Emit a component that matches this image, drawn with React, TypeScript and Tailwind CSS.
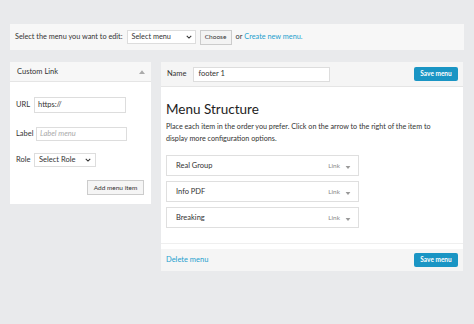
import React from 'react'

const font = { fontFamily: 'Lato, "Liberation Sans", sans-serif' }

function Caret({ className = '' }: { className?: string }) {
  return (
    <svg viewBox="0 0 8 5" className={className} width="6" height="4">
      <path d="M1 1l3 3 3-3" fill="none" stroke="#333" strokeWidth="1.4" />
    </svg>
  )
}

function MenuItem({ title }: { title: string }) {
  return (
    <div className="flex h-[21px] w-[193px] items-center border border-[#dfdfdf] bg-white pl-[9px] pr-[7px]">
      <span className="flex-1 text-[7.5px] text-[#333]">{title}</span>
      <span className="text-[6.5px] text-[#888]">Link</span>
      <svg viewBox="0 0 8 5" width="6" height="3" className="ml-[5px] mt-[4px]">
        <path d="M0 0h8L4 5z" fill="#999" />
      </svg>
    </div>
  )
}

export default function App() {
  return (
    <div className="h-[324px] w-[474px] overflow-hidden bg-[#e9eaec] px-[10px] pt-[24px]" style={font}>
      {/* menu picker */}
      <div className="flex h-[26px] items-center bg-[#f7f7f7] pl-[5px] text-[7.3px] text-[#333]">
        <span>Select the menu you want to edit:</span>
        <div className="ml-[4px] flex h-[14px] w-[69px] items-center justify-between border border-[#ddd] bg-white pl-[4px] pr-[3px]">
          <span>Select menu</span>
          <Caret />
        </div>
        <div className="ml-[4px] flex h-[15px] w-[32px] items-center justify-center border border-[#ccc] bg-[#f3f3f3] text-[6.5px]">
          Choose
        </div>
        <span className="ml-[4px]">or</span>
        <span className="ml-[2px] text-[#1e9fce]">Create new menu.</span>
      </div>

      <div className="mt-[12px] flex items-start gap-[10px]">
        {/* custom link */}
        <div className="w-[141px] bg-white">
          <div className="flex h-[20px] items-center justify-between border-b border-[#e5e5e5] bg-[#f7f7f7] pl-[7px] pr-[6px] text-[7.5px] text-[#333]">
            <span>Custom Link</span>
            <svg viewBox="0 0 8 5" width="6" height="4">
              <path d="M0 5h8L4 0z" fill="#aaa" />
            </svg>
          </div>
          <div className="flex flex-col px-[6px] pb-[9px] pt-[15px] text-[7.5px] text-[#333]">
            <div className="flex items-center">
              <span className="w-[18px]">URL</span>
              <div className="flex h-[16px] w-[92px] items-center border border-[#ddd] pl-[3px]">https://</div>
            </div>
            <div className="mt-[14px] flex items-center">
              <span className="w-[20px]">Label</span>
              <div className="flex h-[14px] w-[91px] items-center border border-[#ddd] pl-[3px] italic text-[#aaa]">
                Label menu
              </div>
            </div>
            <div className="mt-[12px] flex items-center">
              <span className="w-[18px]">Role</span>
              <div className="flex h-[14px] w-[62px] items-center justify-between border border-[#ddd] pl-[4px] pr-[4px]">
                <span>Select Role</span>
                <Caret />
              </div>
            </div>
            <div className="mt-[13px] flex justify-end pr-[1px]">
              <div className="flex h-[15px] w-[57px] items-center justify-center border border-[#ccc] bg-[#f5f5f5] text-[6.5px]">
                Add menu item
              </div>
            </div>
          </div>
        </div>

        {/* menu structure */}
        <div className="w-[302px] bg-white">
          <div className="flex h-[25px] items-center border-b border-[#e5e5e5] bg-[#f5f5f5] pl-[6px] pr-[5px] text-[7.5px] text-[#333]">
            <span>Name</span>
            <div className="ml-[7px] flex h-[15px] w-[137px] items-center border border-[#ddd] bg-white pl-[4px]">footer 1</div>
            <div className="ml-auto flex h-[14px] w-[44px] items-center justify-center rounded-[2px] bg-[#1a95c4] text-[6.5px] font-bold text-white">
              Save menu
            </div>
          </div>
          <div className="border-b border-[#efefef] px-[5px] pb-[15px] pt-[13px] text-[#333]">
            <div className="text-[13.5px] leading-[18px] text-[#222]">Menu Structure</div>
            <div className="mt-[3px] text-[7.2px] leading-[12px]">
              Place each item in the order you prefer. Click on the arrow to the right of the item to
              <br />
              display more configuration options.
            </div>
            <div className="mt-[10px] flex flex-col gap-[5px]">
              <MenuItem title="Real Group" />
              <MenuItem title="Info PDF" />
              <MenuItem title="Breaking" />
            </div>
          </div>
          <div className="h-[5px]" />
          <div className="flex h-[22px] items-center bg-[#f5f5f5] pl-[5px] pr-[5px]">
            <span className="text-[7.5px] text-[#1e9fce]">Delete menu</span>
            <div className="ml-auto flex h-[14px] w-[44px] items-center justify-center rounded-[2px] bg-[#1a95c4] text-[6.5px] font-bold text-white">
              Save menu
            </div>
          </div>
        </div>
      </div>
    </div>
  )
}
